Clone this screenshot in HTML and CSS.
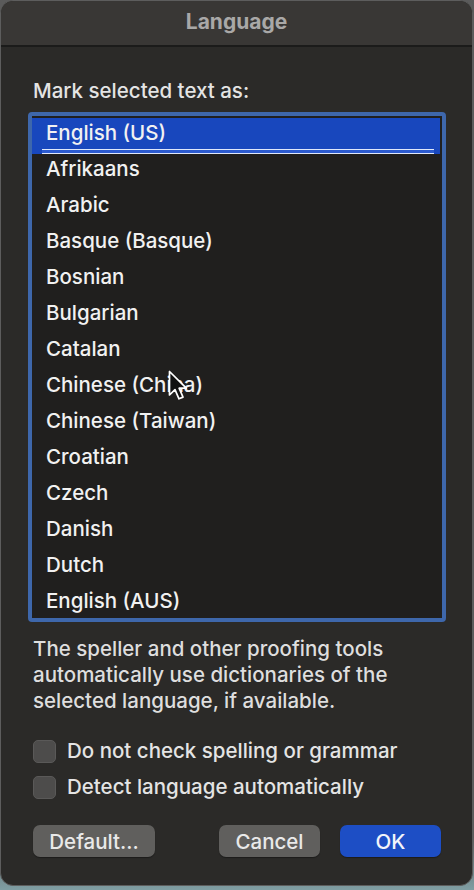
FILE: index.html
```html
<!DOCTYPE html>
<html lang="en">
<head>
<meta charset="utf-8">
<title>Language</title>
<link rel="stylesheet" href="styles.css">
</head>
<body>
<div class="window">
  <div class="titlebar">Language</div>
  <div class="content">
    <div class="prompt">Mark selected text as:</div>
    <div class="listbox">
      <div class="list">
        <div class="row selected"><span class="label">English (US)</span><span class="marker"></span></div>
        <div class="row">Afrikaans</div>
        <div class="row">Arabic</div>
        <div class="row">Basque (Basque)</div>
        <div class="row">Bosnian</div>
        <div class="row">Bulgarian</div>
        <div class="row">Catalan</div>
        <div class="row">Chinese (China)</div>
        <div class="row">Chinese (Taiwan)</div>
        <div class="row">Croatian</div>
        <div class="row">Czech</div>
        <div class="row">Danish</div>
        <div class="row">Dutch</div>
        <div class="row last">English (AUS)</div>
      </div>
    </div>
    <p class="desc">The speller and other proofing tools automatically use dictionaries of the selected language, if available.</p>
    <div class="checks">
      <label class="check"><span class="box"></span>Do not check spelling or grammar</label>
      <label class="check"><span class="box"></span>Detect language automatically</label>
    </div>
    <div class="buttons">
      <button class="btn default">Default...</button>
      <button class="btn cancel">Cancel</button>
      <button class="btn ok">OK</button>
    </div>
  </div>
  <svg class="cursor" width="20" height="32" viewBox="0 0 20 32" aria-hidden="true">
    <path d="M1.5 1.5 L1.5 25 L7 19.6 L11 28.8 L15 27.1 L11.1 18.2 L18.3 18.2 Z" fill="#111" stroke="#fff" stroke-width="1.7" stroke-linejoin="round"/>
  </svg>
</div>
</body>
</html>
```

FILE: styles.css
```css
* { box-sizing: border-box; }

html, body {
  margin: 0;
  padding: 0;
  height: 100%;
}

body {
  background: linear-gradient(#5b5b5b 0%, #5b5b5b 94%, #7f9ea3 100%);
  font-family: Inter, "Noto Sans", "Liberation Sans", sans-serif;
  font-weight: 500;
  color: #e9e9e9;
  overflow: hidden;
}

.window {
  position: relative;
  width: 473px;
  height: 886px;
  background: #2b2a28;
  border: 1px solid #5d5d5d;
  border-radius: 13px;
  overflow: hidden;
  display: flex;
  flex-direction: column;
}

.titlebar {
  height: 46px;
  flex: none;
  background: #393735;
  border-bottom: 2px solid #1b1b1a;
  text-align: center;
  font-weight: 700;
  font-size: 21px;
  line-height: 42px;
  color: #a9a8a7;
}

.content {
  padding: 31px 26px 0 27px;
  display: flex;
  flex-direction: column;
}

.prompt {
  font-size: 20.5px;
  line-height: 26px;
  padding-left: 5px;
  color: #e4e4e4;
  margin-bottom: 8px;
}

.listbox {
  height: 510px;
  width: 418px;
  flex: none;
  border: 4px solid #3e67ab;
  border-radius: 4px;
  background: #201f1e;
  padding: 2px 2px 0 0;
  overflow: hidden;
}

.list {
  height: 100%;
  overflow: hidden;
  display: flex;
  flex-direction: column;
}

.row {
  flex: none;
  height: 36px;
  line-height: 29px;
  padding-bottom: 7px;
  padding-left: 14px;
  font-size: 20.5px;
  color: #f1f1f1;
  white-space: nowrap;
}

.row.last {
  height: 32px;
  padding-bottom: 3px;
}

.row.selected {
  background: #1847bd;
  display: flex;
  flex-direction: column;
  padding-bottom: 0;
}

.row.selected .label {
  height: 31px;
  line-height: 29px;
}

.marker {
  display: block;
  height: 5px;
  margin: 0 6px 0 -4px;
  border-top: 1.5px solid #dfe8fb;
  border-bottom: 1.5px solid #dfe8fb;
  background: #2c5bd0;
}

.desc {
  margin: 14px 0 0;
  padding-left: 5px;
  font-size: 20.5px;
  line-height: 26px;
  color: #dedede;
}

.checks {
  margin-top: 19px;
  display: flex;
  flex-direction: column;
}

.check {
  height: 36px;
  display: flex;
  align-items: center;
  padding-left: 5px;
  font-size: 20.5px;
  line-height: 36px;
  color: #e4e4e4;
}

.box {
  width: 23px;
  height: 23px;
  border-radius: 5px;
  background: #4d4c4b;
  border: 1px solid #5a5958;
  margin-right: 11px;
  flex: none;
}

.buttons {
  margin-top: 20px;
  display: flex;
  padding: 0 5px;
  gap: 20px;
}

.btn {
  height: 32px;
  border: none;
  border-radius: 7px;
  background: #605f5d;
  color: #e9e9e9;
  font-family: inherit;
  font-weight: 500;
  font-size: 20.5px;
  padding: 0;
  box-shadow: 0 1px 1px rgba(0, 0, 0, 0.35);
}

.default { width: 122px; margin-right: auto; }
.cancel { width: 101px; }
.ok { width: 101px; background: #1d4ec5; color: #f2f4fa; }

.cursor {
  position: absolute;
  left: 167px;
  top: 369px;
}
```
